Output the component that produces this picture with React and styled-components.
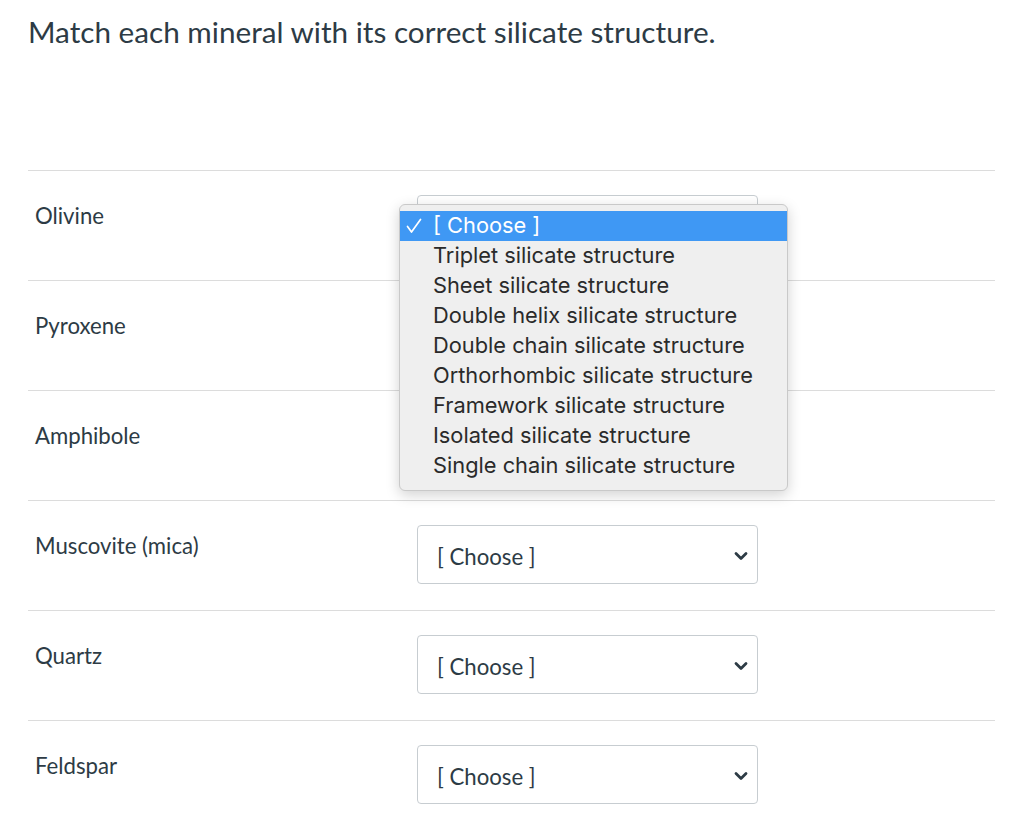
import React from 'react'
import styled, { createGlobalStyle } from 'styled-components'

const GlobalStyle = createGlobalStyle`
  body {
    margin: 0;
    background: #fff;
    font-family: Lato, "Open Sans", sans-serif;
    color: #2d3b45;
  }
`

const Page = styled.div`
  width: 1024px;
  height: 829px;
  overflow: hidden;
  padding: 0 29px 0 28px;
  box-sizing: border-box;
`

const Title = styled.h1`
  margin: 0;
  padding-top: 13px;
  font-size: 29.7px;
  font-weight: 400;
  line-height: 38px;
  height: 157px;
`

const Table = styled.div`
  display: flex;
  flex-direction: column;
`

const Row = styled.div`
  display: grid;
  grid-template-columns: 389px 341px;
  height: 110px;
  border-top: 1px solid #dcdcdc;
  box-sizing: border-box;
`

const Label = styled.div`
  padding: 30px 0 0 7px;
  font-size: 22.2px;
  line-height: 30px;
`

const SelectWrap = styled.div`
  position: relative;
  margin-top: 24px;
  height: 59px;
`

const SelectBox = styled.div`
  height: 59px;
  box-sizing: border-box;
  border: 1px solid #c7cdd1;
  border-radius: 4px;
  background: #fff;
  display: flex;
  align-items: center;
  justify-content: space-between;
  padding: 3px 9px 0 19px;
  font-size: 22.2px;
  color: #2d3b45;
`

const Menu = styled.ul`
  position: absolute;
  left: -18px;
  top: 9px;
  width: 389px;
  margin: 0;
  padding: 6px 0 9px;
  list-style: none;
  box-sizing: border-box;
  background: #efefef;
  border: 1px solid #c9c9c9;
  border-radius: 6px;
  box-shadow: 0 4px 14px rgba(0, 0, 0, 0.18);
  font-family: Inter, "Noto Sans", sans-serif;
  font-size: 21.8px;
  color: #2a2a2a;
  z-index: 2;
`

const Option = styled.li`
  position: relative;
  height: 30px;
  line-height: 29px;
  padding-left: 33px;
  white-space: nowrap;
  background: ${p => (p.$active ? '#3f98f4' : 'transparent')};
  color: ${p => (p.$active ? '#fff' : '#2a2a2a')};
`

const CheckMark = styled.svg`
  position: absolute;
  left: 6px;
  top: 7px;
`

const Check = () => (
  <CheckMark width="16" height="16" viewBox="0 0 16 16">
    <path d="M1.5 8.5 L5.5 14 L14.5 1.5" fill="none" stroke="#fff" strokeWidth="1.7" strokeLinecap="round" strokeLinejoin="round" />
  </CheckMark>
)

const Chevron = () => (
  <svg width="14" height="10" viewBox="0 0 14 10">
    <path d="M2 2.5 L7 7.5 L12 2.5" fill="none" stroke="#2d3b45" strokeWidth="2.8" strokeLinecap="round" strokeLinejoin="round" />
  </svg>
)

const minerals = ['Olivine', 'Pyroxene', 'Amphibole', 'Muscovite (mica)', 'Quartz', 'Feldspar']

const options = [
  '[ Choose ]',
  'Triplet silicate structure',
  'Sheet silicate structure',
  'Double helix silicate structure',
  'Double chain silicate structure',
  'Orthorhombic silicate structure',
  'Framework silicate structure',
  'Isolated silicate structure',
  'Single chain silicate structure',
]

export default function App() {
  return (
    <Page>
      <GlobalStyle />
      <Title>Match each mineral with its correct silicate structure.</Title>
      <Table>
        {minerals.map((m, i) => (
          <Row key={m}>
            <Label>{m}</Label>
            <SelectWrap>
              <SelectBox>
                <span>[ Choose ]</span>
                <Chevron />
              </SelectBox>
              {i === 0 && (
                <Menu>
                  {options.map((o, j) => (
                    <Option key={o} $active={j === 0}>
                      {j === 0 && <Check />}
                      {o}
                    </Option>
                  ))}
                </Menu>
              )}
            </SelectWrap>
          </Row>
        ))}
      </Table>
    </Page>
  )
}
